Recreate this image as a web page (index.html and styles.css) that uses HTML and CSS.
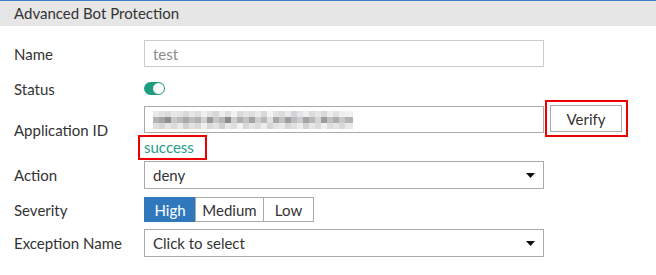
FILE: index.html
```html
<!DOCTYPE html>
<html>
<head>
<meta charset="utf-8">
<title>Advanced Bot Protection</title>
<link rel="stylesheet" href="styles.css">
</head>
<body>
<div class="panel">
  <div class="header">Advanced Bot Protection</div>
  <div class="form">
    <div class="row">
      <div class="label">Name</div>
      <div class="field input disabled">test</div>
    </div>
    <div class="row row-status">
      <div class="label">Status</div>
      <div class="toggle"><span class="knob"></span></div>
    </div>
    <div class="row row-app">
      <div class="label">Application ID</div>
      <div class="app-col">
        <div class="app-line">
          <div class="field input app-input">
            <svg class="mosaic" width="200" height="18" viewBox="0 0 200 18" shape-rendering="crispEdges">
              <g>
                <rect x="0" y="0" width="6" height="6" fill="#e9e9ec"/><rect x="6" y="0" width="6" height="6" fill="#e2e2e2"/><rect x="12" y="0" width="6" height="6" fill="#dcdcdc"/><rect x="18" y="0" width="6" height="6" fill="#ebe8e4"/><rect x="24" y="0" width="6" height="6" fill="#e4e4e4"/><rect x="30" y="0" width="6" height="6" fill="#d9d9d9"/><rect x="36" y="0" width="6" height="6" fill="#e7e7ea"/><rect x="42" y="0" width="6" height="6" fill="#dedede"/><rect x="48" y="0" width="6" height="6" fill="#f0efed"/><rect x="54" y="0" width="6" height="6" fill="#e2e2e5"/><rect x="60" y="0" width="6" height="6" fill="#d6d6d6"/><rect x="66" y="0" width="6" height="6" fill="#ececec"/><rect x="72" y="0" width="6" height="6" fill="#e0e0e0"/><rect x="78" y="0" width="6" height="6" fill="#f2f2f2"/><rect x="84" y="0" width="6" height="6" fill="#dadada"/><rect x="90" y="0" width="6" height="6" fill="#e6e3de"/><rect x="96" y="0" width="6" height="6" fill="#dfdfe2"/><rect x="102" y="0" width="6" height="6" fill="#ebebeb"/><rect x="108" y="0" width="6" height="6" fill="#d8d8d8"/><rect x="114" y="0" width="6" height="6" fill="#f4f4f4"/><rect x="120" y="0" width="6" height="6" fill="#e3e3e3"/><rect x="126" y="0" width="6" height="6" fill="#dcdcdf"/><rect x="132" y="0" width="6" height="6" fill="#e9e9e9"/><rect x="138" y="0" width="6" height="6" fill="#d4d4d8"/><rect x="144" y="0" width="6" height="6" fill="#e5e5e5"/><rect x="150" y="0" width="6" height="6" fill="#efefef"/><rect x="156" y="0" width="6" height="6" fill="#dcdcdc"/><rect x="162" y="0" width="6" height="6" fill="#e8e6e2"/><rect x="168" y="0" width="6" height="6" fill="#d9d9dc"/><rect x="174" y="0" width="6" height="6" fill="#ededed"/><rect x="180" y="0" width="6" height="6" fill="#e1e1e1"/><rect x="186" y="0" width="6" height="6" fill="#eeeeee"/><rect x="192" y="0" width="8" height="6" fill="#f2f2f4"/>
              </g>
              <g>
                <rect x="0" y="6" width="6" height="6" fill="#b4b4b4"/><rect x="6" y="6" width="6" height="6" fill="#a6a6a8"/><rect x="12" y="6" width="6" height="6" fill="#8f8f8f"/><rect x="18" y="6" width="6" height="6" fill="#c8c8c8"/><rect x="24" y="6" width="6" height="6" fill="#bcbcbc"/><rect x="30" y="6" width="6" height="6" fill="#a9a9a9"/><rect x="36" y="6" width="6" height="6" fill="#c0bfbb"/><rect x="42" y="6" width="6" height="6" fill="#b2b2b5"/><rect x="48" y="6" width="6" height="6" fill="#d2d2d2"/><rect x="54" y="6" width="6" height="6" fill="#9a9a9a"/><rect x="60" y="6" width="6" height="6" fill="#c6c6c6"/><rect x="66" y="6" width="6" height="6" fill="#b8b6b2"/><rect x="72" y="6" width="6" height="6" fill="#8c8c8c"/><rect x="78" y="6" width="6" height="6" fill="#cfcfcf"/><rect x="84" y="6" width="6" height="6" fill="#b0b0b4"/><rect x="90" y="6" width="6" height="6" fill="#c4c4c4"/><rect x="96" y="6" width="6" height="6" fill="#a3a3a3"/><rect x="102" y="6" width="6" height="6" fill="#d0cfcb"/><rect x="108" y="6" width="6" height="6" fill="#b9b9b9"/><rect x="114" y="6" width="6" height="6" fill="#e0e0e0"/><rect x="120" y="6" width="6" height="6" fill="#a8a8ac"/><rect x="126" y="6" width="6" height="6" fill="#c2c2c2"/><rect x="132" y="6" width="6" height="6" fill="#9e9e9e"/><rect x="138" y="6" width="6" height="6" fill="#bdbdbd"/><rect x="144" y="6" width="6" height="6" fill="#ccccd0"/><rect x="150" y="6" width="6" height="6" fill="#a4a4a4"/><rect x="156" y="6" width="6" height="6" fill="#b7b7b7"/><rect x="162" y="6" width="6" height="6" fill="#d6d6d6"/><rect x="168" y="6" width="6" height="6" fill="#9c9ca0"/><rect x="174" y="6" width="6" height="6" fill="#c0c0c0"/><rect x="180" y="6" width="6" height="6" fill="#acacac"/><rect x="186" y="6" width="6" height="6" fill="#c9c9c9"/><rect x="192" y="6" width="8" height="6" fill="#b3b3b8"/>
              </g>
              <g>
                <rect x="0" y="12" width="6" height="6" fill="#e0e0e0"/><rect x="6" y="12" width="6" height="6" fill="#d6d6d8"/><rect x="12" y="12" width="6" height="6" fill="#e6e6e6"/><rect x="18" y="12" width="6" height="6" fill="#dcdcdc"/><rect x="24" y="12" width="6" height="6" fill="#e9e9e9"/><rect x="30" y="12" width="6" height="6" fill="#d2d2d2"/><rect x="36" y="12" width="6" height="6" fill="#e4e2de"/><rect x="42" y="12" width="6" height="6" fill="#dadada"/><rect x="48" y="12" width="6" height="6" fill="#efefef"/><rect x="54" y="12" width="6" height="6" fill="#d9d9dc"/><rect x="60" y="12" width="6" height="6" fill="#e3e3e3"/><rect x="66" y="12" width="6" height="6" fill="#d0d0d0"/><rect x="72" y="12" width="6" height="6" fill="#e8e8e8"/><rect x="78" y="12" width="6" height="6" fill="#dedede"/><rect x="84" y="12" width="6" height="6" fill="#f2f2f2"/><rect x="90" y="12" width="6" height="6" fill="#d8d8d8"/><rect x="96" y="12" width="6" height="6" fill="#e5e5e8"/><rect x="102" y="12" width="6" height="6" fill="#dcdcdc"/><rect x="108" y="12" width="6" height="6" fill="#ededed"/><rect x="114" y="12" width="6" height="6" fill="#d4d4d4"/><rect x="120" y="12" width="6" height="6" fill="#e2e2e2"/><rect x="126" y="12" width="6" height="6" fill="#eaeaea"/><rect x="132" y="12" width="6" height="6" fill="#d7d7da"/><rect x="138" y="12" width="6" height="6" fill="#e0e0e0"/><rect x="144" y="12" width="6" height="6" fill="#ececec"/><rect x="150" y="12" width="6" height="6" fill="#d3d3d3"/><rect x="156" y="12" width="6" height="6" fill="#e6e6e6"/><rect x="162" y="12" width="6" height="6" fill="#dbdbdb"/><rect x="168" y="12" width="6" height="6" fill="#f0f0f0"/><rect x="174" y="12" width="6" height="6" fill="#dcdcdf"/><rect x="180" y="12" width="6" height="6" fill="#e4e4e4"/><rect x="186" y="12" width="6" height="6" fill="#d8d8d8"/><rect x="192" y="12" width="8" height="6" fill="#e9e9e9"/>
              </g>
            </svg>
          </div>
          <div class="mark verify-mark"><button class="verify">Verify</button></div>
        </div>
        <div class="mark success">success</div>
      </div>
    </div>
    <div class="row row-action">
      <div class="label">Action</div>
      <div class="field select">
        <span>deny</span>
        <svg class="caret" width="9" height="5" viewBox="0 0 9 5"><polygon points="0,0 9,0 4.5,5" fill="#111"/></svg>
      </div>
    </div>
    <div class="row row-severity">
      <div class="label">Severity</div>
      <div class="segmented">
        <span class="seg seg-high active">High</span>
        <span class="seg seg-medium">Medium</span>
        <span class="seg seg-low">Low</span>
      </div>
    </div>
    <div class="row row-exception">
      <div class="label">Exception Name</div>
      <div class="field select">
        <span>Click to select</span>
        <svg class="caret" width="9" height="5" viewBox="0 0 9 5"><polygon points="0,0 9,0 4.5,5" fill="#111"/></svg>
      </div>
    </div>
  </div>
</div>
</body>
</html>
```

FILE: styles.css
```css
* { box-sizing: border-box; }

body {
  margin: 0;
  background: #ffffff;
  font-family: Lato, "Noto Sans", sans-serif;
  font-size: 15px;
  color: #333333;
}

.header {
  border-top: 1px solid #3a7fc1;
  background: #e6e6e6;
  height: 26px;
  line-height: 25px;
  padding-left: 14px;
  font-size: 15px;
  color: #333333;
}

.form {
  padding: 14px 0 0 14px;
}

.row {
  display: flex;
  align-items: center;
}

.label {
  width: 130px;
  flex: none;
  color: #333333;
}

.field {
  width: 400px;
  flex: none;
  display: flex;
  align-items: center;
  border: 1px solid #aaaaaa;
  background: #ffffff;
  padding: 0 8px;
}

.input {
  height: 27px;
}

.disabled {
  border-color: #cccccc;
  color: #8c8c8c;
}

.row-status {
  height: 13px;
  margin-top: 15px;
}

.toggle {
  width: 21px;
  height: 13px;
  border-radius: 7px;
  background: #1e9e7f;
  position: relative;
}

.knob {
  position: absolute;
  right: 1px;
  top: 1px;
  width: 11px;
  height: 11px;
  border-radius: 50%;
  background: radial-gradient(circle at 65% 40%, #ffffff 45%, #e2e2e2 100%);
}

.row-app {
  margin-top: 5px;
}

.app-col {
  display: flex;
  flex-direction: column;
}

.app-line {
  display: flex;
  align-items: flex-start;
}

.app-input {
  margin-top: 6px;
}

.mosaic {
  display: block;
}

.mark {
  border: 2px solid #ee0000;
}

.verify-mark {
  margin-left: 1px;
  padding: 3px 4px 3px 3px;
}

.verify {
  display: block;
  width: 72px;
  height: 27px;
  border: 1px solid #aaaaaa;
  background: #ffffff;
  font-family: Lato, "Noto Sans", sans-serif;
  font-size: 15px;
  color: #333333;
  padding: 0;
}

.success {
  margin-top: -2px;
  margin-left: -6px;
  width: 69px;
  height: 25px;
  padding-left: 4px;
  line-height: 20px;
  color: #22a088;
}

.row-action {
  margin-top: 1px;
}

.select {
  height: 28px;
  justify-content: space-between;
}

.caret {
  display: block;
}

.row-severity {
  margin-top: 8px;
}

.segmented {
  display: flex;
}

.seg {
  height: 25px;
  border: 1px solid #aaaaaa;
  display: flex;
  align-items: center;
  justify-content: center;
  background: #ffffff;
  color: #333333;
}

.seg + .seg {
  margin-left: -1px;
}

.seg-high { width: 52px; }
.seg-medium { width: 69px; }
.seg-low { width: 51px; }

.seg.active {
  background: #2f78bd;
  border-color: #2f78bd;
  color: #ffffff;
}

.row-exception {
  margin-top: 7px;
}
```
